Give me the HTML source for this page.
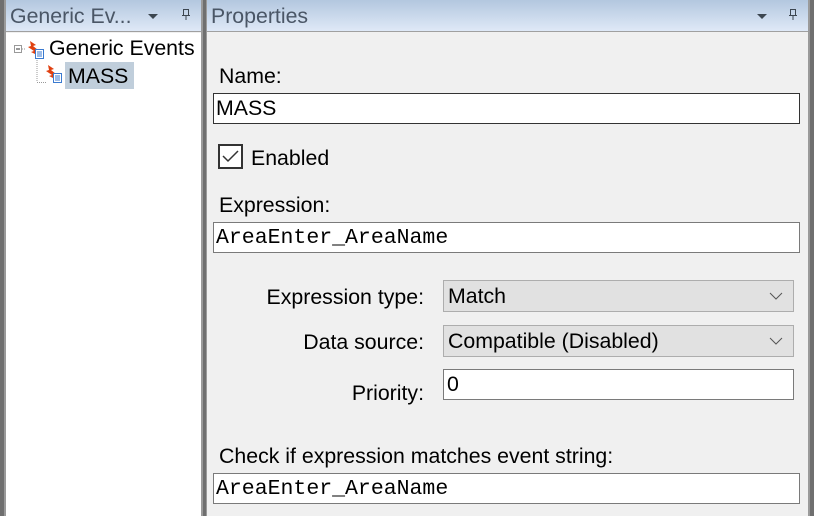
<!DOCTYPE html>
<html><head><style>
*{margin:0;padding:0;box-sizing:border-box}
body{width:814px;height:516px;overflow:hidden;background:#f0f0f0;font-family:"Liberation Sans",sans-serif;font-size:21.3px;color:#000;position:relative}
.a{position:absolute}
.title{background:linear-gradient(#b3c7df,#dfe9f7);height:32px;color:#4a5666;border-bottom:1px solid #a0a0a0}
.inp{position:absolute;background:#fff;border:1px solid #7a7a7a;height:31px;padding-left:2px;line-height:29px}
.mono{font-family:"Liberation Mono",monospace;font-size:21.5px;line-height:31px}
.combo{position:absolute;background:#e1e1e1;border:1px solid #adadad;height:32px;line-height:30px;padding-left:4px}
.chev{position:absolute;right:10px;top:8px}
.lbl{position:absolute;text-align:right;width:220px}
</style></head><body>
<div class="a" style="left:0;top:0;width:6px;height:516px;background:#6f6f6f;border-right:2px solid #9a9a9a"></div>
<div class="a" style="left:201px;top:0;width:6px;height:516px;background:#6f6f6f;border-left:2px solid #9a9a9a;border-right:1px solid #9a9a9a"></div>
<div class="a" style="left:808px;top:0;width:6px;height:516px;background:#6f6f6f;border-left:2px solid #9a9a9a"></div>
<div class="a" style="left:6px;top:33px;width:195px;height:483px;background:#fff"></div>
<div class="a title" style="left:6px;top:0;width:195px"><span class="a" style="left:4px;top:4px">Generic Ev...</span>
<svg class="a" style="left:142px;top:14px" width="10" height="5"><path d="M0 0H10L5 5Z" fill="#3c4650"/></svg>
<svg class="a" style="left:176px;top:9px" width="8" height="11"><path d="M1.5 .5h5v6h-5zM0 6.5h8M4 7v4" stroke="#3c4650" fill="none"/></svg></div>
<div class="a title" style="left:207px;top:0;width:601px"><span class="a" style="left:4px;top:4px">Properties</span>
<svg class="a" style="left:550px;top:14px" width="10" height="5"><path d="M0 0H10L5 5Z" fill="#3c4650"/></svg>
<svg class="a" style="left:582px;top:9px" width="8" height="11"><path d="M1.5 .5h5v6h-5zM0 6.5h8M4 7v4" stroke="#3c4650" fill="none"/></svg></div>
<svg class="a" style="left:12px;top:40px" width="60" height="50">
<rect x="2.5" y="5.5" width="7" height="7" fill="#fff" stroke="#999"/><path d="M4 9h4" stroke="#333"/>
<path d="M10 9h4M25 18v24M25 42.5h10" stroke="#999" stroke-dasharray="1 1"/>
<path d="M18 1l6 4-3 1 5 4-3 1 6 6-10-5 3-1-6-4 3-1z" fill="#e04010"/>
<rect x="23.5" y="9.5" width="8" height="9" fill="#fff" stroke="#3a7ad0"/><path d="M25 12h5M25 14h5M25 16h5" stroke="#3a7ad0"/>
<path d="M36 25l6 4-3 1 5 4-3 1 6 6-10-5 3-1-6-4 3-1z" fill="#e04010"/>
<rect x="41.5" y="33.5" width="8" height="9" fill="#fff" stroke="#3a7ad0"/><path d="M43 36h5M43 38h5M43 40h5" stroke="#3a7ad0"/>
</svg>
<span class="a" style="left:49px;top:36px">Generic Events</span>
<div class="a" style="left:65px;top:62px;width:69px;height:27px;background:#c0cedb"></div>
<span class="a" style="left:68px;top:64px">MASS</span>
<span class="a" style="left:219px;top:64px">Name:</span>
<div class="inp" style="left:213px;top:93px;width:587px;border-color:#333">MASS</div>
<div class="a" style="left:218px;top:144px;width:25px;height:25px;border:2px solid #333;background:#fff"></div>
<svg class="a" style="left:218px;top:144px" width="25" height="25"><path d="M5 12l5 5 10-10" stroke="#333" stroke-width="1.5" fill="none"/></svg>
<span class="a" style="left:251px;top:146px">Enabled</span>
<span class="a" style="left:219px;top:193px">Expression:</span>
<div class="inp mono" style="left:213px;top:222px;width:587px">AreaEnter_AreaName</div>
<span class="lbl" style="left:204px;top:285px">Expression type:</span>
<div class="combo" style="left:443px;top:280px;width:351px">Match<svg class="chev" width="14" height="14"><path d="M1 4l6 6 6-6" stroke="#555" fill="none"/></svg></div>
<span class="lbl" style="left:204px;top:330px">Data source:</span>
<div class="combo" style="left:443px;top:325px;width:351px">Compatible (Disabled)<svg class="chev" width="14" height="14"><path d="M1 4l6 6 6-6" stroke="#555" fill="none"/></svg></div>
<span class="lbl" style="left:204px;top:381px">Priority:</span>
<div class="inp" style="left:443px;top:369px;width:351px;padding-left:3px">0</div>
<span class="a" style="left:219px;top:444px">Check if expression matches event string:</span>
<div class="inp mono" style="left:213px;top:473px;width:587px">AreaEnter_AreaName</div>
</body></html>
